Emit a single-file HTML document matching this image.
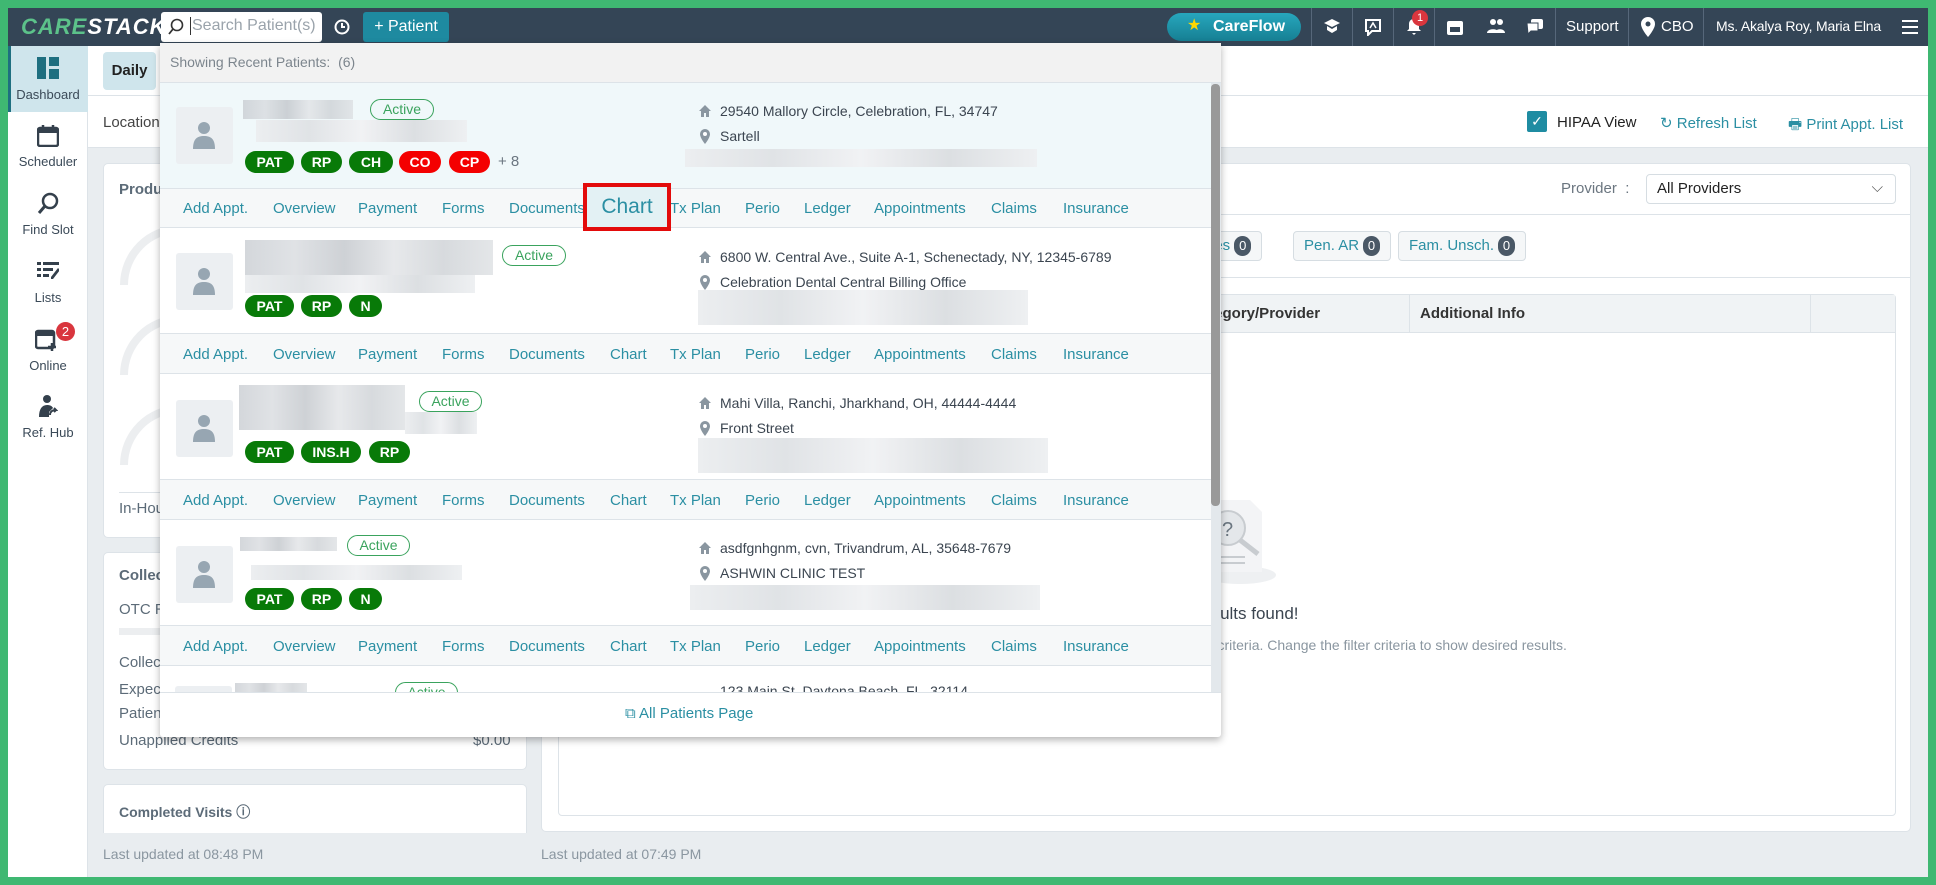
<!DOCTYPE html>
<html><head><meta charset="utf-8">
<style>
*{box-sizing:border-box;margin:0;padding:0}
body{width:1936px;height:885px;overflow:hidden;background:#3fb872;font-family:"Liberation Sans",Arial,sans-serif;position:relative}
.a{position:absolute}
.hdr{left:8px;top:8px;width:1920px;height:38px;background:#344556}
.side{left:8px;top:46px;width:80px;height:831px;background:#fff;border-right:1px solid #dde3e8}
.main{left:88px;top:46px;width:1840px;height:831px;background:#e9edf0}
.si{position:absolute;left:8px;width:80px;text-align:center;font-size:13px;color:#3b4a58}
.card{background:#fff;border:1px solid #dde3e8;border-radius:5px}
.lk{position:absolute;font-size:15px;color:#2b8fa3}
.tag{position:absolute;height:22px;border-radius:11px;color:#fff;font-size:14px;font-weight:bold;text-align:center;line-height:22px;background:#087a08}
.red{background:#f40000}
.act{position:absolute;height:21px;border:1px solid #3aa35d;border-radius:11px;color:#3aa35d;font-size:14px;text-align:center;line-height:19px}
.av{position:absolute;left:176px;width:57px;height:57px;background:#eceff2;border-radius:3px}
.pv{position:absolute;left:193px}
.bl{position:absolute;background:linear-gradient(90deg,#c9cdd2 0,#d8dbdf 20%,#c2c6cb 40%,#e1e3e6 60%,#cdd1d5 80%,#dde0e3 100%);opacity:.8}
.bl2{position:absolute;background:linear-gradient(90deg,#eceef0 0,#e0e3e6 25%,#f1f2f4 50%,#dcdfe2 75%,#eef0f2 100%)}
.addr{position:absolute;left:720px;font-size:14px;color:#3b4550}
.ic{position:absolute;left:698px}
.chip{position:absolute;top:231px;height:30px;border:1px solid #d6dde2;border-radius:4px;background:#f5f7f8;font-size:15px;color:#2b8fa3;line-height:28px;padding:0 10px}
.chip b{display:inline-block;background:#4a5866;color:#fff;border-radius:9px;width:17px;height:20px;line-height:20px;text-align:center;font-weight:normal;font-size:13px;margin-left:4px}
.hi{position:absolute;top:18px;fill:#fff}
.sep{position:absolute;top:8px;width:1px;height:38px;background:#56677a}
.gray{color:#5c6b78}
.arc{position:absolute;left:120px;width:120px;height:60px;border:8px solid #eceef0;border-bottom:none;border-radius:60px 60px 0 0}
</style></head><body>
<div class="a hdr"></div>
<div class="a" style="left:21px;top:14px;font-size:22px;font-weight:bold;font-style:italic;letter-spacing:1px"><span style="color:#5cc28a">CARE</span><span style="color:#fff">STACK</span></div>
<div class="a" style="left:161px;top:12px;width:161px;height:30px;background:#fff;border-radius:3px"></div>
<svg class="a" style="left:167px;top:18px" width="18" height="18" viewBox="0 0 18 18"><circle cx="10" cy="7" r="5.5" fill="none" stroke="#333" stroke-width="1.6"/><path d="M6 11L2 16" stroke="#333" stroke-width="1.8"/></svg>
<div class="a" style="left:190px;top:17px;font-size:16px;color:#9aa3ab;border-left:1px solid #333;padding-left:1px">Search Patient(s)</div>
<svg class="a" style="left:333px;top:18px" width="18" height="18" viewBox="0 0 18 18"><circle cx="9" cy="9" r="6.5" fill="none" stroke="#fff" stroke-width="2"/><path d="M9 5v4h3" stroke="#fff" stroke-width="2" fill="none"/></svg>
<div class="a" style="left:363px;top:12px;width:86px;height:30px;background:#1e8aa0;border-radius:3px;color:#fff;font-size:16px;line-height:30px;text-align:center">+ Patient</div>
<div class="a" style="left:1167px;top:13px;width:134px;height:28px;background:linear-gradient(#27a7bd,#167f93);border-radius:14px;color:#fff;font-size:16px;font-weight:bold;line-height:28px;padding-left:46px">CareFlow</div>
<div class="a" style="left:1187px;top:15px;color:#ffd700;font-size:16px">★</div>
<div class="sep" style="left:1311px"></div><div class="sep" style="left:1352px"></div><div class="sep" style="left:1393px"></div><div class="sep" style="left:1434px"></div><div class="sep" style="left:1555px"></div><div class="sep" style="left:1628px"></div><div class="sep" style="left:1703px"></div>
<svg class="hi" style="left:1323px" width="18" height="16" viewBox="0 0 18 16"><path d="M9 1L17 5 9 9 1 5z M4 8v4l5 3 5-3V8L9 11z"/></svg>
<svg class="hi" style="left:1364px" width="18" height="18" viewBox="0 0 18 18"><path d="M2 2h14v11H8l-4 4v-4H2z" fill="none" stroke="#fff" stroke-width="2"/><path d="M6 10l3-5 3 5" stroke="#fff" stroke-width="1.5" fill="none"/></svg>
<svg class="hi" style="left:1405px" width="18" height="18" viewBox="0 0 18 18"><path d="M9 1c3 0 5 2 5 5v5l2 2H2l2-2V6c0-3 2-5 5-5z M7 15h4l-2 2z"/></svg>
<div class="a" style="left:1412px;top:10px;width:16px;height:16px;border-radius:8px;background:#d9363e;color:#fff;font-size:11px;text-align:center;line-height:16px">1</div>
<svg class="hi" style="left:1446px" width="18" height="18" viewBox="0 0 18 18"><rect x="1" y="3" width="16" height="14" rx="2" fill="#fff"/><rect x="4" y="9" width="10" height="5" fill="#344556"/></svg>
<svg class="hi" style="left:1486px" width="20" height="16" viewBox="0 0 20 16"><circle cx="7" cy="4" r="3"/><circle cx="14" cy="4" r="3"/><path d="M1 15c0-5 12-5 12 0z M9 15c0-5 10-5 10 0z"/></svg>
<svg class="hi" style="left:1526px" width="18" height="18" viewBox="0 0 18 18"><rect x="5" y="1" width="12" height="10" rx="2"/><path d="M1 5h11v8H5l-3 3z" stroke="#344556" stroke-width="1"/></svg>
<div class="a" style="left:1566px;top:18px;color:#fff;font-size:15px">Support</div>
<svg class="hi" style="left:1641px;top:17px" width="14" height="20" viewBox="0 0 14 20"><path d="M7 0a7 7 0 017 7c0 5-7 13-7 13S0 12 0 7a7 7 0 017-7z"/><circle cx="7" cy="7" r="2.5" fill="#344556"/></svg>
<div class="a" style="left:1661px;top:18px;color:#fff;font-size:15px">CBO</div>
<div class="a" style="left:1716px;top:18px;color:#fff;font-size:14px;letter-spacing:-0.2px">Ms. Akalya Roy, Maria Elna</div>
<div class="a" style="left:1902px;top:20px;width:16px;height:2px;background:#fff;box-shadow:0 6px 0 #fff,0 12px 0 #fff"></div>

<div class="a side"></div>
<div class="a" style="left:8px;top:46px;width:80px;height:66px;background:#cfe5ec;border-left:3px solid #1e6f80"></div>
<svg class="a" style="left:37px;top:57px" width="22" height="22" viewBox="0 0 22 22"><rect x="0" y="0" width="9" height="22" fill="#1e6f80"/><rect x="12" y="0" width="10" height="9" fill="#1e6f80"/><rect x="12" y="12" width="10" height="10" fill="#1e6f80"/></svg>
<div class="si" style="top:87px">Dashboard</div>
<svg class="a" style="left:37px;top:125px" width="22" height="22" viewBox="0 0 22 22"><rect x="1" y="3" width="20" height="18" rx="2" fill="none" stroke="#34404c" stroke-width="2.5"/><rect x="1" y="3" width="20" height="5" fill="#34404c"/><path d="M6 0v5M16 0v5" stroke="#34404c" stroke-width="2.5"/></svg>
<div class="si" style="top:154px">Scheduler</div>
<svg class="a" style="left:37px;top:192px" width="22" height="24" viewBox="0 0 22 24"><circle cx="13" cy="9" r="7" fill="none" stroke="#34404c" stroke-width="2.5"/><path d="M8 14l-6 7" stroke="#34404c" stroke-width="3"/></svg>
<div class="si" style="top:222px">Find Slot</div>
<svg class="a" style="left:37px;top:261px" width="22" height="18" viewBox="0 0 22 18"><path d="M0 1h4v3H0zM6 1h16v3H6zM0 7h4v3H0zM6 7h10v3H6zM0 13h4v3H0zM6 13h6v3H6zM14 16l7-9 2 2-7 9h-2z" fill="#34404c"/></svg>
<div class="si" style="top:290px">Lists</div>
<svg class="a" style="left:35px;top:328px" width="24" height="24" viewBox="0 0 24 24"><rect x="1" y="3" width="18" height="17" rx="2" fill="none" stroke="#34404c" stroke-width="2.5"/><rect x="1" y="3" width="18" height="5" fill="#34404c"/><path d="M17 15v8M13 19h8" stroke="#34404c" stroke-width="2.5"/></svg>
<div class="a" style="left:56px;top:322px;width:19px;height:19px;border-radius:10px;background:#d9363e;color:#fff;font-size:13px;text-align:center;line-height:19px">2</div>
<div class="si" style="top:358px">Online</div>
<svg class="a" style="left:38px;top:395px" width="20" height="22" viewBox="0 0 20 22"><circle cx="9" cy="4" r="4" fill="#34404c"/><path d="M1 22c0-8 3-12 8-12 3 0 5 1 6 3l-4 4v5z" fill="#34404c"/><path d="M12 20c0-3 2-5 6-5l-2-2M18 15l-2 2" stroke="#34404c" stroke-width="2" fill="none"/></svg>
<div class="si" style="top:425px">Ref. Hub</div>

<div class="a main"></div>
<div class="a" style="left:88px;top:46px;width:1840px;height:50px;background:#fff;border-bottom:1px solid #dde3e8"></div>
<div class="a" style="left:103px;top:52px;width:53px;height:38px;background:#cfe5ec;border-radius:4px;font-size:15px;font-weight:bold;color:#222;text-align:center;line-height:38px">Daily</div>
<div class="a" style="left:88px;top:96px;width:1840px;height:52px;background:#fff;border-bottom:1px solid #dde3e8"></div>
<div class="a" style="left:103px;top:114px;font-size:15px;color:#444">Location</div>
<div class="a" style="left:1527px;top:111px;width:20px;height:21px;background:#1f8ca2;border-radius:2px;color:#fff;font-size:14px;text-align:center;line-height:21px">✓</div>
<div class="a" style="left:1557px;top:114px;font-size:15px;color:#222">HIPAA View</div>
<div class="a" style="left:1660px;top:114px;font-size:15px;color:#2b8fa3">↻ Refresh List</div>
<div class="a" style="left:1788px;top:114px;font-size:15px;color:#2b8fa3">🖶 Print Appt. List</div>

<div class="a card" style="left:103px;top:163px;width:424px;height:375px"></div>
<div class="a gray" style="left:119px;top:181px;font-size:15px;font-weight:bold">Production</div>
<div class="arc" style="top:225px"></div>
<div class="arc" style="top:315px"></div>
<div class="arc" style="top:405px"></div>
<div class="a" style="left:119px;top:492px;width:390px;height:1px;background:#dde3e8"></div>
<div class="a gray" style="left:119px;top:500px;font-size:15px">In-House</div>
<div class="a card" style="left:103px;top:552px;width:424px;height:218px"></div>
<div class="a gray" style="left:119px;top:567px;font-size:15px;font-weight:bold">Collections</div>
<div class="a gray" style="left:119px;top:601px;font-size:15px">OTC R</div>
<div class="a" style="left:119px;top:628px;width:390px;height:7px;background:#eceef0"></div>
<div class="a gray" style="left:119px;top:654px;font-size:15px">Collected</div>
<div class="a gray" style="left:119px;top:681px;font-size:15px">Expected</div>
<div class="a gray" style="left:119px;top:705px;font-size:15px">Patient</div>
<div class="a gray" style="left:119px;top:732px;font-size:15px">Unapplied Credits</div>
<div class="a gray" style="left:473px;top:732px;font-size:15px">$0.00</div>
<div class="a card" style="left:103px;top:784px;width:424px;height:60px;border-bottom:none"></div>
<div class="a" style="left:103px;top:833px;width:424px;height:12px;background:#e9edf0"></div>
<div class="a gray" style="left:119px;top:802px;font-size:14px;font-weight:bold">Completed Visits ⓘ</div>
<div class="a" style="left:103px;top:846px;font-size:14px;color:#8a96a0">Last updated at 08:48 PM</div>

<div class="a card" style="left:541px;top:163px;width:1370px;height:669px"></div>
<div class="a" style="left:1561px;top:180px;font-size:15px;color:#6b7680">Provider &nbsp;:</div>
<div class="a" style="left:1646px;top:174px;width:250px;height:30px;border:1px solid #d6dde2;border-radius:4px;font-size:15px;color:#222;line-height:28px;padding-left:10px">All Providers<span style="position:absolute;right:12px;top:-1px;color:#555">⌵</span></div>
<div class="a" style="left:542px;top:214px;width:1368px;height:1px;background:#dde3e8"></div>
<div class="chip" style="left:1180px"> Notes<b>0</b></div>
<div class="chip" style="left:1293px">Pen. AR<b>0</b></div>
<div class="chip" style="left:1398px">Fam. Unsch.<b>0</b></div>
<div class="a" style="left:542px;top:277px;width:1368px;height:1px;background:#dde3e8"></div>
<div class="a" style="left:558px;top:294px;width:1338px;height:522px;border:1px solid #dde3e8;border-radius:4px"></div>
<div class="a" style="left:559px;top:295px;width:1336px;height:38px;background:#f0f3f5;border-bottom:1px solid #dde3e8"></div>
<div class="a" style="left:1409px;top:295px;width:1px;height:38px;background:#dde3e8"></div>
<div class="a" style="left:1810px;top:295px;width:1px;height:38px;background:#dde3e8"></div>
<div class="a" style="left:1190px;top:305px;font-size:15px;font-weight:bold;color:#333">Category/Provider</div>
<div class="a" style="left:1420px;top:305px;font-size:15px;font-weight:bold;color:#333">Additional Info</div>
<svg class="a" style="left:1200px;top:495px" width="80" height="90" viewBox="0 0 80 90"><ellipse cx="40" cy="80" rx="36" ry="9" fill="#eef0f2"/><path d="M10 5h40l12 12v60H10z" fill="#f3f4f6"/><circle cx="28" cy="33" r="17" fill="#e4e7ea" stroke="#c8ccd0" stroke-width="2"/><text x="22" y="41" font-size="20" fill="#6b7680" font-family="Liberation Sans">?</text><path d="M40 45l18 14" stroke="#c8ccd0" stroke-width="5"/><path d="M15 62h30M15 68h30" stroke="#c8ccd0" stroke-width="2"/></svg>
<div class="a" style="left:1170px;top:604px;font-size:17px;color:#3b4550">No results found!</div>
<div class="a" style="left:1100px;top:637px;font-size:14px;color:#8a96a0">No results for filter criteria. Change the filter criteria to show desired results.</div>
<div class="a" style="left:541px;top:846px;font-size:14px;color:#8a96a0">Last updated at 07:49 PM</div>

<!-- dropdown -->
<div class="a" style="left:160px;top:43px;width:1061px;height:694px;background:#fff;box-shadow:0 3px 8px rgba(0,0,0,.3);border-radius:0 0 3px 3px;overflow:hidden">
<div class="a" style="left:0;top:0;width:1061px;height:40px;background:#f2f2f2;border-bottom:1px solid #dde3e8;font-size:14px;color:#7c858d;padding:11px 10px">Showing Recent Patients: &nbsp;(6)</div>
</div>
<div class="a" style="left:160px;top:83px;width:1051px;height:105px;background:#f0f8fa"></div>
<div class="a" style="left:160px;top:188px;width:1051px;height:40px;background:#f6f8f9;border-top:1px solid #dde3e8;border-bottom:1px solid #dde3e8"></div>
<div class="a" style="left:160px;top:333px;width:1051px;height:41px;background:#f6f8f9;border-top:1px solid #dde3e8;border-bottom:1px solid #dde3e8"></div>
<div class="a" style="left:160px;top:479px;width:1051px;height:41px;background:#f6f8f9;border-top:1px solid #dde3e8;border-bottom:1px solid #dde3e8"></div>
<div class="a" style="left:160px;top:625px;width:1051px;height:41px;background:#f6f8f9;border-top:1px solid #dde3e8;border-bottom:1px solid #dde3e8"></div>
<div class="a" style="left:1211px;top:83px;width:10px;height:609px;background:#e3e8ec"></div>
<div class="a" style="left:1211px;top:84px;width:9px;height:422px;background:#999;border-radius:4px"></div>

<!-- patient 1 -->
<div class="av" style="top:107px"></div>
<svg class="pv" style="top:121px" width="22" height="28" viewBox="0 0 22 28"><circle cx="11" cy="7" r="6" fill="#97a6b2"/><path d="M0 28c0-10 4-13 11-13s11 3 11 13z" fill="#97a6b2"/></svg>
<div class="bl" style="left:243px;top:100px;width:110px;height:19px"></div>
<div class="act" style="left:370px;top:99px;width:64px">Active</div>
<div class="bl2" style="left:256px;top:120px;width:211px;height:22px"></div>
<div class="tag" style="left:245px;top:151px;width:49px">PAT</div>
<div class="tag" style="left:301px;top:151px;width:41px">RP</div>
<div class="tag" style="left:349px;top:151px;width:44px">CH</div>
<div class="tag red" style="left:399px;top:151px;width:42px">CO</div>
<div class="tag red" style="left:449px;top:151px;width:41px">CP</div>
<div class="a" style="left:498px;top:153px;font-size:15px;color:#6b7680">+ 8</div>
<div class="addr" style="top:103px">29540 Mallory Circle, Celebration, FL, 34747</div>
<div class="addr" style="top:128px">Sartell</div>
<div class="bl2" style="left:685px;top:149px;width:352px;height:18px"></div>

<!-- patient 2 -->
<div class="av" style="top:253px"></div>
<svg class="pv" style="top:267px" width="22" height="28" viewBox="0 0 22 28"><circle cx="11" cy="7" r="6" fill="#97a6b2"/><path d="M0 28c0-10 4-13 11-13s11 3 11 13z" fill="#97a6b2"/></svg>
<div class="bl" style="left:245px;top:240px;width:248px;height:35px"></div>
<div class="bl2" style="left:245px;top:275px;width:230px;height:18px"></div>
<div class="act" style="left:502px;top:245px;width:64px">Active</div>
<div class="tag" style="left:245px;top:295px;width:49px">PAT</div>
<div class="tag" style="left:301px;top:295px;width:41px">RP</div>
<div class="tag" style="left:349px;top:295px;width:33px">N</div>
<div class="addr" style="top:249px">6800 W. Central Ave., Suite A-1, Schenectady, NY, 12345-6789</div>
<div class="addr" style="top:274px">Celebration Dental Central Billing Office</div>
<div class="bl2" style="left:698px;top:290px;width:330px;height:35px"></div>

<!-- patient 3 -->
<div class="av" style="top:400px"></div>
<svg class="pv" style="top:414px" width="22" height="28" viewBox="0 0 22 28"><circle cx="11" cy="7" r="6" fill="#97a6b2"/><path d="M0 28c0-10 4-13 11-13s11 3 11 13z" fill="#97a6b2"/></svg>
<div class="bl" style="left:239px;top:385px;width:166px;height:45px"></div>
<div class="bl2" style="left:405px;top:412px;width:72px;height:22px"></div>
<div class="act" style="left:419px;top:391px;width:63px">Active</div>
<div class="tag" style="left:245px;top:441px;width:49px">PAT</div>
<div class="tag" style="left:301px;top:441px;width:60px">INS.H</div>
<div class="tag" style="left:369px;top:441px;width:41px">RP</div>
<div class="addr" style="top:395px">Mahi Villa, Ranchi, Jharkhand, OH, 44444-4444</div>
<div class="addr" style="top:420px">Front Street</div>
<div class="bl2" style="left:698px;top:438px;width:350px;height:35px"></div>

<!-- patient 4 -->
<div class="av" style="top:546px"></div>
<svg class="pv" style="top:560px" width="22" height="28" viewBox="0 0 22 28"><circle cx="11" cy="7" r="6" fill="#97a6b2"/><path d="M0 28c0-10 4-13 11-13s11 3 11 13z" fill="#97a6b2"/></svg>
<div class="bl" style="left:240px;top:537px;width:97px;height:14px"></div>
<div class="act" style="left:347px;top:535px;width:63px">Active</div>
<div class="bl2" style="left:251px;top:565px;width:211px;height:15px"></div>
<div class="tag" style="left:245px;top:588px;width:49px">PAT</div>
<div class="tag" style="left:301px;top:588px;width:41px">RP</div>
<div class="tag" style="left:349px;top:588px;width:33px">N</div>
<div class="addr" style="top:540px">asdfgnhgnm, cvn, Trivandrum, AL, 35648-7679</div>
<div class="addr" style="top:565px">ASHWIN CLINIC TEST</div>
<div class="bl2" style="left:690px;top:585px;width:350px;height:25px"></div>

<!-- patient 5 partial -->
<div class="a" style="left:160px;top:666px;width:1051px;height:26px;overflow:hidden">
<div class="av" style="left:15px;top:20px"></div>
<div class="bl" style="left:75px;top:17px;width:72px;height:14px"></div>
<div class="act" style="left:235px;top:16px;width:63px">Active</div>
<div class="addr" style="left:560px;top:17px">123 Main St, Daytona Beach, FL, 32114</div>
</div>
<div class="a" style="left:160px;top:692px;width:1061px;height:1px;background:#dde3e8"></div>
<div class="a" style="left:625px;top:705px;font-size:15px;color:#2b8fa3">⧉ All Patients Page</div>

<!-- home/pin icons -->
<svg class="ic" style="top:104px" width="14" height="14" viewBox="0 0 14 14"><path d="M7 1l6 6h-2v6H8V9H6v4H3V7H1z" fill="#8a96a0"/></svg>
<svg class="ic" style="top:129px" width="14" height="16" viewBox="0 0 14 16"><path d="M7 0a5 5 0 015 5c0 4-5 10-5 10S2 9 2 5a5 5 0 015-5z" fill="#8a96a0"/><circle cx="7" cy="5" r="2" fill="#fff"/></svg>
<svg class="ic" style="top:250px" width="14" height="14" viewBox="0 0 14 14"><path d="M7 1l6 6h-2v6H8V9H6v4H3V7H1z" fill="#8a96a0"/></svg>
<svg class="ic" style="top:275px" width="14" height="16" viewBox="0 0 14 16"><path d="M7 0a5 5 0 015 5c0 4-5 10-5 10S2 9 2 5a5 5 0 015-5z" fill="#8a96a0"/><circle cx="7" cy="5" r="2" fill="#fff"/></svg>
<svg class="ic" style="top:396px" width="14" height="14" viewBox="0 0 14 14"><path d="M7 1l6 6h-2v6H8V9H6v4H3V7H1z" fill="#8a96a0"/></svg>
<svg class="ic" style="top:421px" width="14" height="16" viewBox="0 0 14 16"><path d="M7 0a5 5 0 015 5c0 4-5 10-5 10S2 9 2 5a5 5 0 015-5z" fill="#8a96a0"/><circle cx="7" cy="5" r="2" fill="#fff"/></svg>
<svg class="ic" style="top:541px" width="14" height="14" viewBox="0 0 14 14"><path d="M7 1l6 6h-2v6H8V9H6v4H3V7H1z" fill="#8a96a0"/></svg>
<svg class="ic" style="top:566px" width="14" height="16" viewBox="0 0 14 16"><path d="M7 0a5 5 0 015 5c0 4-5 10-5 10S2 9 2 5a5 5 0 015-5z" fill="#8a96a0"/><circle cx="7" cy="5" r="2" fill="#fff"/></svg>

<!-- link rows -->
<div class="lk" style="left:183px;top:200px">Add Appt.</div><div class="lk" style="left:273px;top:200px">Overview</div><div class="lk" style="left:358px;top:200px">Payment</div><div class="lk" style="left:442px;top:200px">Forms</div><div class="lk" style="left:509px;top:200px">Documents</div><div class="lk" style="left:670px;top:200px">Tx Plan</div><div class="lk" style="left:745px;top:200px">Perio</div><div class="lk" style="left:804px;top:200px">Ledger</div><div class="lk" style="left:874px;top:200px">Appointments</div><div class="lk" style="left:991px;top:200px">Claims</div><div class="lk" style="left:1063px;top:200px">Insurance</div>
<div class="a" style="left:583px;top:183px;width:88px;height:48px;border:4px solid #e30b0b;background:#e3f1f4;font-size:21px;color:#2b8fa3;text-align:center;line-height:40px">Chart</div>

<div class="lk" style="left:183px;top:346px">Add Appt.</div><div class="lk" style="left:273px;top:346px">Overview</div><div class="lk" style="left:358px;top:346px">Payment</div><div class="lk" style="left:442px;top:346px">Forms</div><div class="lk" style="left:509px;top:346px">Documents</div><div class="lk" style="left:610px;top:346px">Chart</div><div class="lk" style="left:670px;top:346px">Tx Plan</div><div class="lk" style="left:745px;top:346px">Perio</div><div class="lk" style="left:804px;top:346px">Ledger</div><div class="lk" style="left:874px;top:346px">Appointments</div><div class="lk" style="left:991px;top:346px">Claims</div><div class="lk" style="left:1063px;top:346px">Insurance</div>

<div class="lk" style="left:183px;top:492px">Add Appt.</div><div class="lk" style="left:273px;top:492px">Overview</div><div class="lk" style="left:358px;top:492px">Payment</div><div class="lk" style="left:442px;top:492px">Forms</div><div class="lk" style="left:509px;top:492px">Documents</div><div class="lk" style="left:610px;top:492px">Chart</div><div class="lk" style="left:670px;top:492px">Tx Plan</div><div class="lk" style="left:745px;top:492px">Perio</div><div class="lk" style="left:804px;top:492px">Ledger</div><div class="lk" style="left:874px;top:492px">Appointments</div><div class="lk" style="left:991px;top:492px">Claims</div><div class="lk" style="left:1063px;top:492px">Insurance</div>

<div class="lk" style="left:183px;top:638px">Add Appt.</div><div class="lk" style="left:273px;top:638px">Overview</div><div class="lk" style="left:358px;top:638px">Payment</div><div class="lk" style="left:442px;top:638px">Forms</div><div class="lk" style="left:509px;top:638px">Documents</div><div class="lk" style="left:610px;top:638px">Chart</div><div class="lk" style="left:670px;top:638px">Tx Plan</div><div class="lk" style="left:745px;top:638px">Perio</div><div class="lk" style="left:804px;top:638px">Ledger</div><div class="lk" style="left:874px;top:638px">Appointments</div><div class="lk" style="left:991px;top:638px">Claims</div><div class="lk" style="left:1063px;top:638px">Insurance</div>
</body></html>
